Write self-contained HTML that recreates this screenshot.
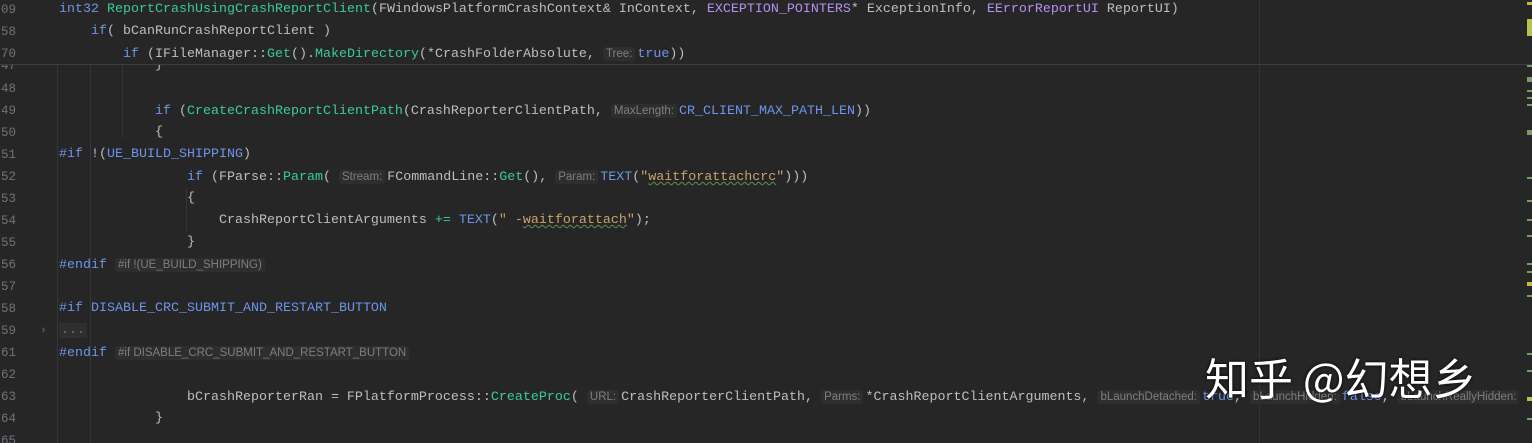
<!DOCTYPE html>
<html><head><meta charset="utf-8"><style>
html,body{margin:0;width:1532px;height:443px;overflow:hidden}
body{background:#262626;position:relative;font-family:"Liberation Mono",monospace;font-size:13.33px;color:#bcbec4}
.l{position:absolute;left:0;height:22px;line-height:22px;white-space:pre;width:1532px}
.n{position:absolute;left:0;width:16px;text-align:right;color:#6f737a;font-size:12.5px}
.c{position:absolute;left:59px}
.k{color:#6c95eb}.f{color:#39cc9b}.m{color:#b392f0}.s{color:#c9a26d}.mc{color:#6c95eb}.pp{color:#6c95eb}
.h{font-family:"Liberation Sans",sans-serif;font-size:11.5px;color:#7d7f84;background:#2e2e2e;border-radius:3px;padding:1px 3px;margin-right:2px}
.w{text-decoration:underline wavy #5f8f4a;text-decoration-thickness:1px}
.g{position:absolute;width:1px;background:#353535}
</style></head><body>
<div class="g" style="left:1259px;top:0;height:443px;background:#343434"></div>
<div class="g" style="left:57px;top:64px;height:379px"></div>
<div class="g" style="left:90px;top:64px;height:379px"></div>
<div class="g" style="left:122px;top:64px;height:74px"></div>
<div class="g" style="left:186px;top:188px;height:44px"></div>

<div class="l" style="top:-1px"><span class="n">09</span><span class="c"><span class="k">int32</span> <span class="f">ReportCrashUsingCrashReportClient</span>(FWindowsPlatformCrashContext&amp; InContext, <span class="m">EXCEPTION_POINTERS</span>* ExceptionInfo, <span class="m">EErrorReportUI</span> ReportUI)</span></div>
<div class="l" style="top:21px"><span class="n">58</span><span class="c">    <span class="k">if</span>( bCanRunCrashReportClient )</span></div>
<div class="l" style="top:43px"><span class="n">70</span><span class="c">        <span class="k">if</span> (IFileManager::<span class="f">Get</span>().<span class="f">MakeDirectory</span>(*CrashFolderAbsolute, <span class="h">Tree:</span><span class="k">true</span>))</span></div>
<div style="position:absolute;left:0;top:64px;width:1532px;height:1px;background:#3d3d3d"></div>

<div class="l" style="top:55px;clip-path:inset(10px 0 0 0)"><span class="n">47</span><span class="c">            }</span></div>
<div class="l" style="top:78px"><span class="n">48</span></div>
<div class="l" style="top:100px"><span class="n">49</span><span class="c">            <span class="k">if</span> (<span class="f">CreateCrashReportClientPath</span>(CrashReporterClientPath, <span class="h">MaxLength:</span><span class="mc">CR_CLIENT_MAX_PATH_LEN</span>))</span></div>
<div class="l" style="top:122px"><span class="n">50</span><span class="c">            {</span></div>
<div class="l" style="top:144px"><span class="n">51</span><span class="c"><span class="pp">#if</span> !(<span class="mc">UE_BUILD_SHIPPING</span>)</span></div>
<div class="l" style="top:166px"><span class="n">52</span><span class="c">                <span class="k">if</span> (FParse::<span class="f">Param</span>( <span class="h">Stream:</span>FCommandLine::<span class="f">Get</span>(), <span class="h">Param:</span><span class="mc">TEXT</span>(<span class="s">"<span class="w">waitforattachcrc</span>"</span>)))</span></div>
<div class="l" style="top:188px"><span class="n">53</span><span class="c">                {</span></div>
<div class="l" style="top:210px"><span class="n">54</span><span class="c">                    CrashReportClientArguments <span class="f">+=</span> <span class="mc">TEXT</span>(<span class="s">" -<span class="w">waitforattach</span>"</span>);</span></div>
<div class="l" style="top:232px"><span class="n">55</span><span class="c">                }</span></div>
<div class="l" style="top:254px"><span class="n">56</span><span class="c"><span class="pp">#endif</span> <span class="h">#if !(UE_BUILD_SHIPPING)</span></span></div>
<div class="l" style="top:276px"><span class="n">57</span></div>
<div class="l" style="top:298px"><span class="n">58</span><span class="c"><span class="pp">#if</span> <span class="mc">DISABLE_CRC_SUBMIT_AND_RESTART_BUTTON</span></span></div>
<div class="l" style="top:320px"><span class="n">59</span><span style="position:absolute;left:40px;color:#6f737a;font-size:11px">›</span><span class="c"><span style="background:#2f2f2f;color:#6f737a;padding:0 2px">...</span></span></div>
<div class="l" style="top:342px"><span class="n">61</span><span class="c"><span class="pp">#endif</span> <span class="h">#if DISABLE_CRC_SUBMIT_AND_RESTART_BUTTON</span></span></div>
<div class="l" style="top:364px"><span class="n">62</span></div>
<div class="l" style="top:386px"><span class="n">63</span><span class="c">                bCrashReporterRan = FPlatformProcess::<span class="f">CreateProc</span>( <span class="h">URL:</span>CrashReporterClientPath, <span class="h">Parms:</span>*CrashReportClientArguments, <span class="h">bLaunchDetached:</span><span class="k">true</span>, <span class="h">bLaunchHidden:</span><span class="k">false</span>, <span class="h">bLaunchReallyHidden:</span></span></div>
<div class="l" style="top:408px"><span class="n">64</span><span class="c">            }</span></div>
<div class="l" style="top:430px"><span class="n">65</span></div>

<div style="position:absolute;left:1205px;top:345px;font-family:'Noto Sans CJK SC',sans-serif;font-size:44px;color:#fff;line-height:62px;white-space:nowrap;text-shadow:0 0 3px #000">知乎 @幻想乡</div>

<div style="position:absolute;left:1527px;top:2px;width:5px;height:3px;background:#c8b840"></div>
<div style="position:absolute;left:1527px;top:19px;width:5px;height:17px;background:#b8c050"></div>
<div style="position:absolute;left:1527px;top:65px;width:5px;height:2px;background:#7a9a6a"></div>
<div style="position:absolute;left:1527px;top:77px;width:5px;height:5px;background:#7a9a6a"></div>
<div style="position:absolute;left:1527px;top:90px;width:5px;height:2px;background:#7a9a6a"></div>
<div style="position:absolute;left:1527px;top:97px;width:5px;height:2px;background:#7a9a6a"></div>
<div style="position:absolute;left:1527px;top:104px;width:5px;height:2px;background:#7a9a6a"></div>
<div style="position:absolute;left:1527px;top:130px;width:5px;height:5px;background:#7a9a6a"></div>
<div style="position:absolute;left:1527px;top:177px;width:5px;height:2px;background:#7a9a6a"></div>
<div style="position:absolute;left:1527px;top:200px;width:5px;height:2px;background:#7a9a6a"></div>
<div style="position:absolute;left:1527px;top:219px;width:5px;height:2px;background:#7a9a6a"></div>
<div style="position:absolute;left:1527px;top:235px;width:5px;height:2px;background:#7a9a6a"></div>
<div style="position:absolute;left:1527px;top:263px;width:5px;height:2px;background:#7a9a6a"></div>
<div style="position:absolute;left:1527px;top:271px;width:5px;height:2px;background:#7a9a6a"></div>
<div style="position:absolute;left:1527px;top:282px;width:5px;height:4px;background:#c8b840"></div>
<div style="position:absolute;left:1527px;top:295px;width:5px;height:2px;background:#7a9a6a"></div>
<div style="position:absolute;left:1527px;top:353px;width:5px;height:2px;background:#7a9a6a"></div>
<div style="position:absolute;left:1527px;top:370px;width:5px;height:2px;background:#7a9a6a"></div>
<div style="position:absolute;left:1527px;top:397px;width:5px;height:4px;background:#b8c050"></div>
<div style="position:absolute;left:1527px;top:418px;width:5px;height:2px;background:#7a9a6a"></div>
</body></html>
